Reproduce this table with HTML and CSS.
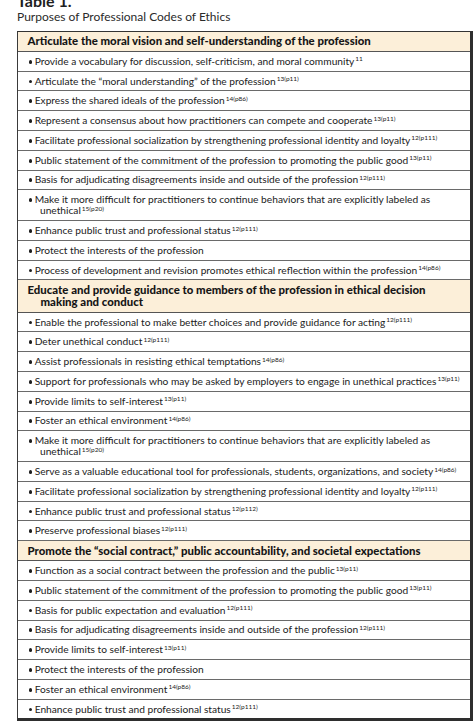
FILE: index.html
```html
<!DOCTYPE html>
<html>
<head>
<meta charset="utf-8">
<link rel="stylesheet" href="styles.css">
</head>
<body>
<div class="page">
  <h1 class="title">Table 1.</h1>
  <p class="subtitle">Purposes of Professional Codes of Ethics</p>
  <div class="table">
    <div class="head">Articulate the moral vision and self-understanding of the profession</div>
    <div class="row">Provide a vocabulary for discussion, self-criticism, and moral community<sup>11</sup></div>
    <div class="row">Articulate the “moral understanding” of the profession<sup>13(p11)</sup></div>
    <div class="row">Express the shared ideals of the profession<sup>14(p86)</sup></div>
    <div class="row">Represent a consensus about how practitioners can compete and cooperate<sup>13(p11)</sup></div>
    <div class="row">Facilitate professional socialization by strengthening professional identity and loyalty<sup>12(p111)</sup></div>
    <div class="row">Public statement of the commitment of the profession to promoting the public good<sup>13(p11)</sup></div>
    <div class="row">Basis for adjudicating disagreements inside and outside of the profession<sup>12(p111)</sup></div>
    <div class="row">Make it more difficult for practitioners to continue behaviors that are explicitly labeled as<br>unethical<sup>15(p20)</sup></div>
    <div class="row">Enhance public trust and professional status<sup>12(p111)</sup></div>
    <div class="row">Protect the interests of the profession</div>
    <div class="row">Process of development and revision promotes ethical reflection within the profession<sup>14(p86)</sup></div>
    <div class="head">Educate and provide guidance to members of the profession in ethical decision<br>making and conduct</div>
    <div class="row">Enable the professional to make better choices and provide guidance for acting<sup>12(p111)</sup></div>
    <div class="row">Deter unethical conduct<sup>12(p111)</sup></div>
    <div class="row">Assist professionals in resisting ethical temptations<sup>14(p86)</sup></div>
    <div class="row">Support for professionals who may be asked by employers to engage in unethical practices<sup>13(p11)</sup></div>
    <div class="row">Provide limits to self-interest<sup>13(p11)</sup></div>
    <div class="row">Foster an ethical environment<sup>14(p86)</sup></div>
    <div class="row">Make it more difficult for practitioners to continue behaviors that are explicitly labeled as<br>unethical<sup>15(p20)</sup></div>
    <div class="row">Serve as a valuable educational tool for professionals, students, organizations, and society<sup>14(p86)</sup></div>
    <div class="row">Facilitate professional socialization by strengthening professional identity and loyalty<sup>12(p111)</sup></div>
    <div class="row">Enhance public trust and professional status<sup>12(p112)</sup></div>
    <div class="row">Preserve professional biases<sup>12(p111)</sup></div>
    <div class="head">Promote the “social contract,” public accountability, and societal expectations</div>
    <div class="row">Function as a social contract between the profession and the public<sup>13(p11)</sup></div>
    <div class="row">Public statement of the commitment of the profession to promoting the public good<sup>13(p11)</sup></div>
    <div class="row">Basis for public expectation and evaluation<sup>12(p111)</sup></div>
    <div class="row">Basis for adjudicating disagreements inside and outside of the profession<sup>12(p111)</sup></div>
    <div class="row">Provide limits to self-interest<sup>13(p11)</sup></div>
    <div class="row">Protect the interests of the profession</div>
    <div class="row">Foster an ethical environment<sup>14(p86)</sup></div>
    <div class="row">Enhance public trust and professional status<sup>12(p111)</sup></div>
  </div>
</div>
</body>
</html>
```
FILE: styles.css
```css
html, body {
  margin: 0;
  padding: 0;
  background: #ffffff;
}
.page {
  padding: 0 1px 0 17px;
  font-family: Lato, "Liberation Sans", sans-serif;
  color: #222222;
}
.title {
  margin: -8px 0 0 0;
  font-size: 16px;
  line-height: 18px;
  font-weight: 700;
  color: #1e1e1e;
}
.subtitle {
  margin: 0 0 7px 0;
  font-size: 12px;
  line-height: 14px;
  color: #2a2a2a;
}
.table {
  border-top: 1px solid #333;
  border-left: 1.5px solid #3a3a3a;
  border-right: 3px solid #2e2e2e;
  border-bottom: 3px solid #2e2e2e;
}
.head {
  background: #fcefd9;
  font-weight: 900;
  font-size: 11.4px;
  line-height: 12.3px;
  padding: 3.3px 6px 3.3px 22.5px;
  text-indent: -13px;
  border-bottom: 1px solid #555;
  color: #161616;
  white-space: nowrap;
}
.row {
  font-size: 10.2px;
  line-height: 11px;
  padding: 3.9px 4px 3.9px 22px;
  text-indent: -11.5px;
  border-bottom: 1px solid #6a6a6a;
  white-space: nowrap;
}
.row::before {
  content: "";
  display: inline-block;
  width: 3.8px;
  height: 3.8px;
  margin-right: 2.4px;
  border-radius: 50%;
  background: #1e1e1e;
  vertical-align: middle;
  position: relative;
  top: -0.5px;
}
.row:last-child {
  border-bottom: none;
}
.row sup {
  font-size: 6.5px;
  line-height: 0;
  vertical-align: 3.5px;
  margin-left: 1px;
}
```
